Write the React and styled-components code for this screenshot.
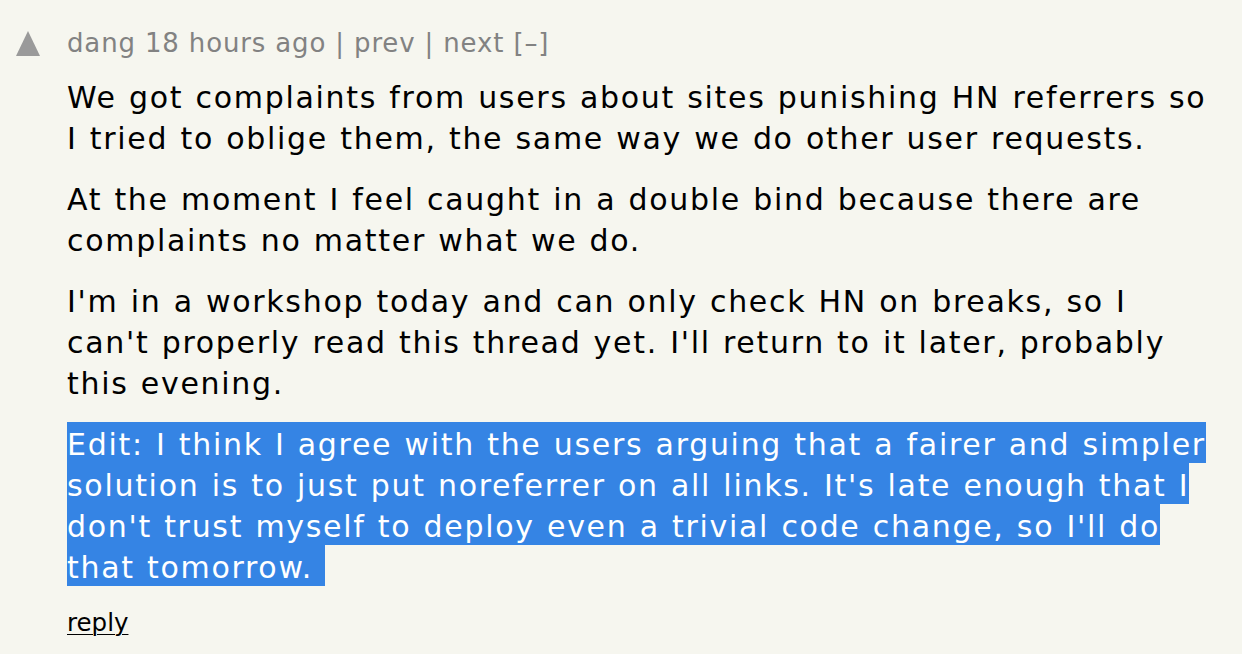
import styled, { createGlobalStyle } from 'styled-components';

const GlobalStyle = createGlobalStyle`
  html, body {
    margin: 0;
    padding: 0;
    background: #f6f6ef;
  }
  body {
    font-family: "DejaVu Sans", Verdana, sans-serif;
    color: #000;
  }
`;

const Comment = styled.div`
  display: flex;
  align-items: flex-start;
  padding: 29px 32px 0 16px;
  min-height: 654px;
  box-sizing: border-box;
`;

const VoteColumn = styled.div`
  width: 51px;
  flex-shrink: 0;
  padding-top: 2px;
`;

const VoteArrow = styled.div`
  width: 0;
  height: 0;
  border-left: 12.5px solid transparent;
  border-right: 12.5px solid transparent;
  border-bottom: 25px solid #9a9a9a;
`;

const Body = styled.div`
  flex: 1;
  min-width: 0;
`;

const Header = styled.div`
  font-size: 26px;
  line-height: 28px;
  letter-spacing: 0.85px;
  color: #828282;
  margin-bottom: 20px;
`;

const Text = styled.div`
  font-size: 30px;
  line-height: 41px;
  letter-spacing: 1.7px;
  word-spacing: 1px;
`;

const Para = styled.p`
  margin: 0 0 20px;
`;

const Selected = styled.span`
  background: #3584e4;
  color: #fff;
  padding: 5px 0 1px;
`;

const ReplyLink = styled.a`
  display: inline-block;
  font-size: 24.5px;
  color: #000;
  text-decoration: underline;
  text-underline-offset: 3px;
  text-decoration-thickness: 1px;
`;

export default function App() {
  return (
    <>
      <GlobalStyle />
      <Comment>
        <VoteColumn>
          <VoteArrow />
        </VoteColumn>
        <Body>
          <Header>dang 18 hours ago | prev | next [–]</Header>
          <Text>
            <Para>
              We got complaints from users about sites punishing HN referrers so I tried to
              oblige them, the same way we do other user requests.
            </Para>
            <Para>
              At the moment I feel caught in a double bind because there are complaints no
              matter what we do.
            </Para>
            <Para>
              I'm in a workshop today and can only check HN on breaks, so I can't properly
              read this thread yet. I'll return to it later, probably this evening.
            </Para>
            <Para>
              <Selected>
                Edit: I think I agree with the users arguing that a fairer and simpler
                solution is to just put noreferrer on all links. It's late enough that I
                don't trust myself to deploy even a trivial code change, so I'll do that
                tomorrow.{'\u00a0'}
              </Selected>
            </Para>
          </Text>
          <ReplyLink href="#">reply</ReplyLink>
        </Body>
      </Comment>
    </>
  );
}
